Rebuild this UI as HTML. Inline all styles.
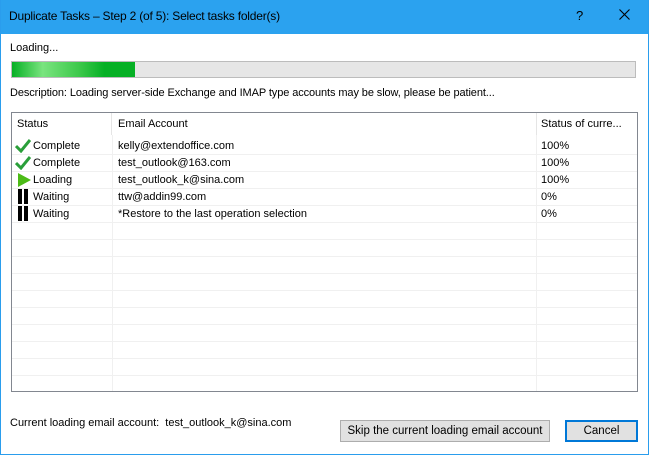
<!DOCTYPE html>
<html><head><style>
*{margin:0;padding:0;box-sizing:border-box}
body{width:649px;height:455px;background:#fff;font-family:"Liberation Sans",sans-serif;font-size:11px;color:#000;position:relative;overflow:hidden}
.win{position:absolute;left:0;top:0;width:649px;height:455px;border:1px solid #2a9ded;border-top:none}
.title{position:absolute;left:0;top:0;width:649px;height:34px;background:#2ba2ef;color:#000;font-size:12px}
.t{position:absolute;white-space:nowrap}
.list{position:absolute;left:11px;top:112px;width:627px;height:280px;border:1px solid #828790;overflow:hidden}
.vl{position:absolute;top:0;bottom:0;width:1px;background:#f0f0f0}
.hl{position:absolute;left:0;right:0;height:1px;background:#f0f0f0}
.btn{position:absolute;background:#e1e1e1;border:1px solid #adadad;text-align:center;line-height:20px;font-size:11.5px}
</style></head><body>
<div class="title">
<div class="t" style="left:9px;top:9px;letter-spacing:-0.2px">Duplicate Tasks – Step 2 (of 5): Select tasks folder(s)</div>
<div class="t" style="left:576px;top:8px;font-size:13px">?</div>
<svg style="position:absolute;left:619px;top:9px" width="11" height="11"><path d="M0.5 0.5 L10.5 10.5 M10.5 0.5 L0.5 10.5" stroke="#000" stroke-width="1.1"/></svg>
</div>
<div class="win"></div>
<div class="t" style="left:10px;top:42px">Loading...</div>
<div style="position:absolute;left:11px;top:61px;width:625px;height:17px;background:#e6e6e6;border:1px solid #bcbcbc"></div>
<div style="position:absolute;left:12px;top:62px;width:123px;height:15px;background:linear-gradient(90deg,#06b025 0%,#7ae47f 25%,#3cc84a 55%,#06b025 75%)"></div>
<div class="t" style="left:10px;top:87px;letter-spacing:-0.1px">Description: Loading server-side Exchange and IMAP type accounts may be slow, please be patient...</div>
<div class="list">
<div class="vl" style="left:99px;top:0;height:22px;background:#e5e5e5"></div>
<div class="vl" style="left:524px;top:0;height:22px;background:#e5e5e5"></div>
<div class="vl" style="left:100px;top:22px"></div>
<div class="vl" style="left:524px;top:22px"></div>
<div class="t" style="left:5px;top:5px">Status</div>
<div class="t" style="left:106px;top:5px">Email Account</div>
<div class="t" style="left:529px;top:5px">Status of curre...</div>
<div class="hl" style="top:41px"></div><div class="hl" style="top:58px"></div><div class="hl" style="top:75px"></div><div class="hl" style="top:92px"></div><div class="hl" style="top:109px"></div><div class="hl" style="top:126px"></div><div class="hl" style="top:143px"></div><div class="hl" style="top:160px"></div><div class="hl" style="top:177px"></div><div class="hl" style="top:194px"></div><div class="hl" style="top:211px"></div><div class="hl" style="top:228px"></div><div class="hl" style="top:245px"></div><div class="hl" style="top:262px"></div>
<svg style="position:absolute;left:3px;top:26px" width="16" height="14"><path d="M1 7 L6 12 L15 1" stroke="#2a9f3a" stroke-width="3" fill="none"/></svg>
<div class="t" style="left:21px;top:27px">Complete</div><div class="t" style="left:106px;top:27px">kelly@extendoffice.com</div><div class="t" style="left:529px;top:27px">100%</div>
<svg style="position:absolute;left:3px;top:43px" width="16" height="14"><path d="M1 7 L6 12 L15 1" stroke="#2a9f3a" stroke-width="3" fill="none"/></svg>
<div class="t" style="left:21px;top:44px">Complete</div><div class="t" style="left:106px;top:44px">test_outlook@163.com</div><div class="t" style="left:529px;top:44px">100%</div>
<svg style="position:absolute;left:6px;top:60px" width="14" height="14"><path d="M0 0 L13 7 L0 14Z" fill="#4cbb17"/></svg>
<div class="t" style="left:21px;top:61px">Loading</div><div class="t" style="left:106px;top:61px">test_outlook_k@sina.com</div><div class="t" style="left:529px;top:61px">100%</div>
<div style="position:absolute;left:6px;top:76px;width:4px;height:15px;background:#000"></div><div style="position:absolute;left:12px;top:76px;width:4px;height:15px;background:#000"></div>
<div class="t" style="left:21px;top:78px">Waiting</div><div class="t" style="left:106px;top:78px">ttw@addin99.com</div><div class="t" style="left:529px;top:78px">0%</div>
<div style="position:absolute;left:6px;top:93px;width:4px;height:15px;background:#000"></div><div style="position:absolute;left:12px;top:93px;width:4px;height:15px;background:#000"></div>
<div class="t" style="left:21px;top:95px">Waiting</div><div class="t" style="left:106px;top:95px">*Restore to the last operation selection</div><div class="t" style="left:529px;top:95px">0%</div>
</div>
<div class="t" style="left:10px;top:417px">Current loading email account:&nbsp; test_outlook_k@sina.com</div>
<div class="btn" style="left:340px;top:420px;width:210px;height:22px">Skip the current loading email account</div>
<div class="btn" style="left:565px;top:420px;width:73px;height:22px;border:2px solid #0078d7;line-height:18px">Cancel</div>
</body></html>
